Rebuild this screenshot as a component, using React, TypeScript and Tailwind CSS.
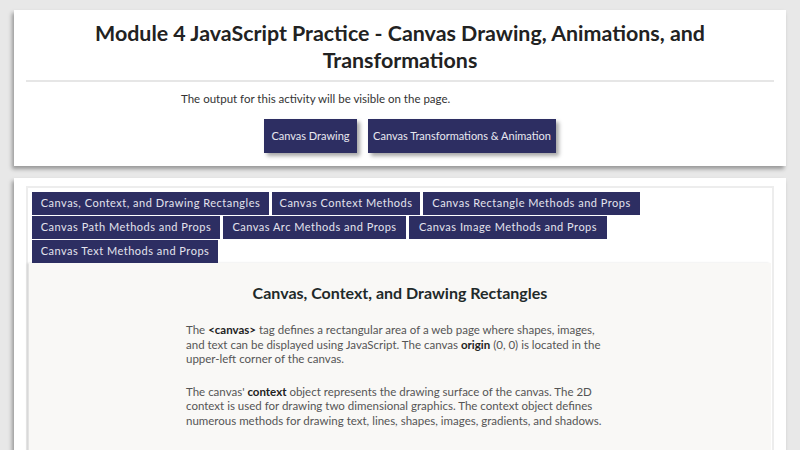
import React from 'react';

const TAB_ROWS = [
  [
    { label: 'Canvas, Context, and Drawing Rectangles', w: 'w-[237px]' },
    { label: 'Canvas Context Methods', w: 'w-[148px]' },
    { label: 'Canvas Rectangle Methods and Props', w: 'w-[217px]' },
  ],
  [
    { label: 'Canvas Path Methods and Props', w: 'w-[188px]' },
    { label: 'Canvas Arc Methods and Props', w: 'w-[183px]' },
    { label: 'Canvas Image Methods and Props', w: 'w-[198px]' },
  ],
  [{ label: 'Canvas Text Methods and Props', w: 'w-[186px]' }],
];

export default function App() {
  return (
    <div className="h-[450px] overflow-hidden bg-[#e8e8e8] px-[14px] pt-[10px] font-['Lato',sans-serif]">
      {/* Header card */}
      <div className="bg-white px-[12px] pt-[10px] pb-[13px] shadow-[-2px_3px_4px_rgba(0,0,0,0.35)]">
        <h1 className="px-[60px] text-center text-[21.4px] font-bold leading-[27px] text-[#222]">
          Module 4 JavaScript Practice - Canvas Drawing, Animations, and Transformations
        </h1>
        <hr className="mt-[6px] border-t-2 border-[#e6e6e6]" />
        <p className="mt-[8px] pl-[155px] text-[11.5px] leading-[18px] text-[#333]">
          The output for this activity will be visible on the page.
        </p>
        <div className="mt-[11px] flex justify-center gap-[11px] pl-[20px]">
          <button className="h-[34px] w-[93px] whitespace-nowrap bg-[#2d2e62] text-[11px] text-[#e8e8f0] shadow-[3px_3px_4px_rgba(0,0,0,0.35)]">
            Canvas Drawing
          </button>
          <button className="h-[34px] w-[188px] whitespace-nowrap bg-[#2d2e62] text-[11px] text-[#e8e8f0] shadow-[3px_3px_4px_rgba(0,0,0,0.35)]">
            Canvas Transformations &amp; Animation
          </button>
        </div>
      </div>

      {/* Content card */}
      <div className="mt-[12px] bg-white px-[12px] pt-[8px] shadow-[-2px_3px_4px_rgba(0,0,0,0.35)]">
        <div className="border-2 border-b-0 border-[#ededed] px-[1px] pt-[4px]">
          <div className="flex flex-col gap-y-[1px] pl-[3px]">
            {TAB_ROWS.map((row, i) => (
              <div key={i} className="flex gap-x-[3px]">
                {row.map((t) => (
                  <button
                    key={t.label}
                    className={`h-[23px] ${t.w} whitespace-nowrap bg-[#2d2e62] text-[11px] tracking-[0.5px] text-[#e4e4ee]`}
                  >
                    {t.label}
                  </button>
                ))}
              </div>
            ))}
          </div>
          <div className="h-[240px] bg-[#f9f8f6] pt-[20px] shadow-[-2px_0_2px_rgba(0,0,0,0.12)]">
            <h2 className="text-center text-[16px] font-bold leading-[20px] text-[#1f2a2a]">
              Canvas, Context, and Drawing Rectangles
            </h2>
            <div className="mx-auto mt-[20px] w-[428px] text-[11.5px] leading-[14.5px] text-[#555]">
              <p>
                The <b className="text-[#222]">&lt;canvas&gt;</b> tag defines a rectangular area of a web page where
                shapes, images, and text can be displayed using JavaScript. The canvas{' '}
                <b className="text-[#222]">origin</b> (0, 0) is located in the upper-left corner of the canvas.
              </p>
              <p className="mt-[18px]">
                The canvas' <b className="text-[#222]">context</b> object represents the drawing surface of the
                canvas. The 2D context is used for drawing two dimensional graphics. The context object defines
                numerous methods for drawing text, lines, shapes, images, gradients, and shadows.
              </p>
            </div>
          </div>
        </div>
      </div>
    </div>
  );
}
